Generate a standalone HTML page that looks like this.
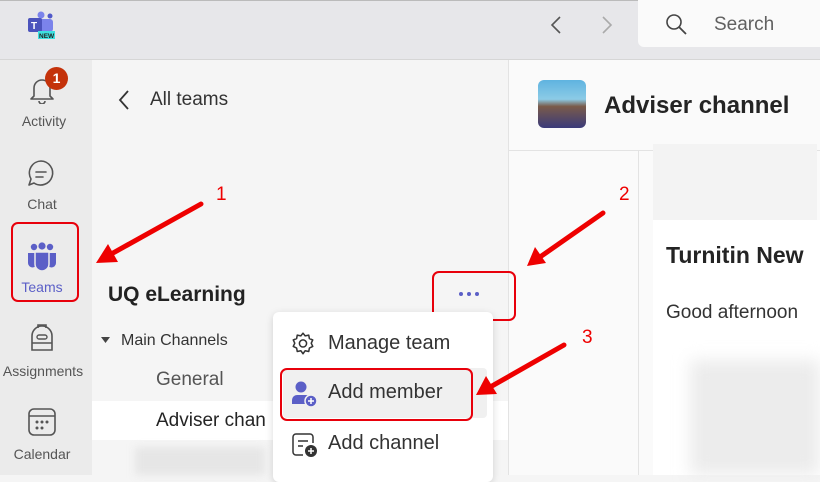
<!DOCTYPE html>
<html><head><style>
*{margin:0;padding:0;box-sizing:border-box}
body{width:820px;height:475px;overflow:hidden;position:relative;font-family:"Liberation Sans","DejaVu Sans",sans-serif;background:#f5f5f5;color:#242424}
.a{position:absolute}
.top{left:0;top:0;width:820px;height:60px;background:#e7e7ea;border-bottom:1px solid #d6d6d6;border-top:1px solid #bbb}
.rail{left:0;top:60px;width:92px;height:415px;background:#ebebeb}
.lp{left:92px;top:60px;width:416px;height:415px;background:#f5f5f5}
.rp{left:508px;top:60px;width:312px;height:415px;background:#fafafa;border-left:1px solid #e3e3e3}
.lbl{width:92px;text-align:center;font-size:14px;color:#555}
.red{border:2.5px solid #e8000b;border-radius:7px}
.num{color:#e00;font-size:19px}
</style></head><body>
<div class="a top"></div>
<div class="a rail"></div>
<div class="a lp"></div>
<div class="a rp"></div>
<!-- teams logo -->
<svg class="a" style="left:26px;top:10px" width="32" height="30" viewBox="0 0 32 30">
<circle cx="15" cy="5" r="3.5" fill="#7b83eb"/><circle cx="24" cy="6" r="2.5" fill="#5059c9"/>
<rect x="13" y="9" width="14" height="13" rx="3" fill="#7b83eb"/>
<rect x="2" y="8" width="14" height="14" rx="2" fill="#4b53bc"/>
<text x="5" y="19" font-size="10" fill="#fff" font-family="Liberation Sans" font-weight="bold">T</text>
<rect x="12" y="21" width="17" height="8" fill="#3ee0e0"/>
<text x="13" y="28" font-size="6.5" fill="#222" font-family="Liberation Sans" font-weight="bold">NEW</text>
</svg>
<svg class="a" style="left:549px;top:15px" width="14" height="20"><path d="M11 2 L3 10 L11 18" fill="none" stroke="#555" stroke-width="1.6"/></svg>
<svg class="a" style="left:600px;top:15px" width="14" height="20"><path d="M3 2 L11 10 L3 18" fill="none" stroke="#aaa" stroke-width="1.6"/></svg>
<div class="a" style="left:638px;top:0;width:182px;height:47px;background:#fafafa;border-radius:0 0 0 6px"></div>
<svg class="a" style="left:665px;top:13px" width="24" height="24"><circle cx="9" cy="9" r="7" fill="none" stroke="#444" stroke-width="1.6"/><path d="M14 14 L21 21" stroke="#444" stroke-width="1.8"/></svg>
<div class="a" style="left:714px;top:14px;font-size:19px;color:#616161">Search</div>

<!-- activity -->
<svg class="a" style="left:27px;top:74px" width="30" height="30"><path d="M7 22 V14 A8 8 0 0 1 23 14 V22 L26 25 H4 Z" fill="none" stroke="#555" stroke-width="1.6" stroke-linejoin="round"/><path d="M12 27 A3 3 0 0 0 18 27" fill="none" stroke="#555" stroke-width="1.6"/></svg>
<div class="a" style="left:45px;top:67px;width:23px;height:23px;border-radius:50%;background:#c4320a;color:#fff;font-size:14px;font-weight:bold;text-align:center;line-height:23px">1</div>
<div class="a lbl" style="left:-2px;top:113px">Activity</div>
<svg class="a" style="left:25px;top:158px" width="32" height="32"><path d="M16 3 A12 12 0 1 1 9 25 L4 27 L6 21 A12 12 0 0 1 16 3 Z" fill="none" stroke="#555" stroke-width="1.6" stroke-linejoin="round"/><path d="M11 14 H21 M11 19 H18" stroke="#555" stroke-width="1.6" stroke-linecap="round"/></svg>
<div class="a lbl" style="left:-4px;top:196px">Chat</div>
<svg class="a" style="left:26px;top:241px" width="32" height="30"><circle cx="8" cy="6" r="3.2" fill="#5b5fc7"/><circle cx="16" cy="5" r="3.6" fill="#5b5fc7"/><circle cx="24" cy="6" r="3.2" fill="#5b5fc7"/><path d="M2 12 H11 V22 A4.5 4.5 0 0 1 2 22 Z" fill="#5b5fc7"/><path d="M21 12 H30 V22 A4.5 4.5 0 0 1 21 22 Z" fill="#5b5fc7"/><path d="M9 11 H23 V23 A7 7 0 0 1 9 23 Z" fill="#5b5fc7" stroke="#ebebeb" stroke-width="1.5"/></svg>
<div class="a lbl" style="left:-4px;top:279px;color:#5b5fc7">Teams</div>
<div class="a red" style="left:11px;top:222px;width:68px;height:80px"></div>
<svg class="a" style="left:27px;top:322px" width="30" height="32"><path d="M5 14 A10 10 0 0 1 25 14 V28 H5 Z" fill="none" stroke="#555" stroke-width="1.6"/><path d="M11 6 V3 H19 V6" fill="none" stroke="#555" stroke-width="1.6"/><rect x="10" y="13" width="10" height="4" rx="2" fill="none" stroke="#555" stroke-width="1.4"/><path d="M5 21 H25" stroke="#555" stroke-width="1.4"/></svg>
<div class="a lbl" style="left:-3px;top:363px">Assignments</div>
<svg class="a" style="left:27px;top:407px" width="30" height="30"><rect x="2" y="2" width="26" height="26" rx="5" fill="none" stroke="#555" stroke-width="1.6"/><path d="M2 9 H28" stroke="#555" stroke-width="1.6"/><g fill="#555"><circle cx="10" cy="15" r="1.5"/><circle cx="15" cy="15" r="1.5"/><circle cx="20" cy="15" r="1.5"/><circle cx="10" cy="21" r="1.5"/><circle cx="15" cy="21" r="1.5"/></g></svg>
<div class="a lbl" style="left:-4px;top:446px">Calendar</div>

<svg class="a" style="left:117px;top:89px" width="14" height="22"><path d="M11 2 L3 11 L11 20" fill="none" stroke="#333" stroke-width="1.8"/></svg>
<div class="a" style="left:150px;top:89px;font-size:19px;color:#333">All teams</div>
<div class="a" style="left:108px;top:283px;font-size:21px;font-weight:bold;color:#222">UQ eLearning</div>
<svg class="a" style="left:458px;top:291px" width="24" height="6"><g fill="#5b5fc7"><circle cx="3" cy="3" r="2"/><circle cx="11" cy="3" r="2"/><circle cx="19" cy="3" r="2"/></g></svg>
<div class="a red" style="left:432px;top:271px;width:84px;height:50px"></div>
<svg class="a" style="left:101px;top:337px" width="10" height="8"><path d="M0 0 H9 L4.5 6 Z" fill="#444"/></svg>
<div class="a" style="left:121px;top:332px;font-size:16px;color:#333">Main Channels</div>
<div class="a" style="left:156px;top:369px;font-size:19px;color:#555">General</div>
<div class="a" style="left:92px;top:401px;width:416px;height:39px;background:#fff"></div>
<div class="a" style="left:156px;top:410px;font-size:19px;color:#242424">Adviser chan</div>
<div class="a" style="left:135px;top:447px;width:130px;height:28px;background:#e6e6e6;filter:blur(4px)"></div>

<div class="a" style="left:538px;top:80px;width:48px;height:48px;border-radius:6px;background:linear-gradient(#5fb3e0,#8ccbe6 40%,#7a5b4a 55%,#3a3a7a)"></div>
<div class="a" style="left:604px;top:92px;font-size:24px;font-weight:bold;color:#242424">Adviser channel</div>
<div class="a" style="left:508px;top:150px;width:312px;height:1px;background:#e3e3e3"></div>
<div class="a" style="left:638px;top:150px;width:1px;height:325px;background:#e3e3e3"></div>
<div class="a" style="left:653px;top:144px;width:164px;height:76px;background:#f3f3f3"></div>
<div class="a" style="left:653px;top:220px;width:167px;height:255px;background:#fff"></div>
<div class="a" style="left:666px;top:242px;font-size:23px;font-weight:bold;color:#242424;white-space:nowrap">Turnitin New</div>
<div class="a" style="left:666px;top:302px;font-size:19px;color:#333;white-space:nowrap">Good afternoon</div>
<div class="a" style="left:690px;top:360px;width:130px;height:115px;background:#ececec;filter:blur(8px)"></div>

<!-- menu -->
<div class="a" style="left:273px;top:312px;width:220px;height:170px;background:#fff;border-radius:6px;box-shadow:0 2px 8px rgba(0,0,0,.15)"></div>
<svg class="a" style="left:290px;top:331px" width="26" height="26" viewBox="0 0 24 24"><path d="M12 2 L14 4.5 L17.3 3.8 L17.9 7 L21 8.3 L19.6 11.3 L21 14.3 L17.9 15.7 L17.3 18.9 L14 18.2 L12 21 L10 18.2 L6.7 18.9 L6.1 15.7 L3 14.3 L4.4 11.3 L3 8.3 L6.1 7 L6.7 3.8 L10 4.5 Z" fill="none" stroke="#333" stroke-width="1.4" stroke-linejoin="round"/><circle cx="12" cy="11.5" r="3.3" fill="none" stroke="#333" stroke-width="1.4"/></svg>
<div class="a" style="left:328px;top:332px;font-size:20px;color:#333">Manage team</div>
<div class="a" style="left:283px;top:368px;width:204px;height:50px;background:#f0f0f0;border-radius:4px"></div>
<svg class="a" style="left:290px;top:380px" width="28" height="28"><circle cx="11" cy="7" r="5.5" fill="#5b5fc7"/><path d="M2 24 V20 A5 5 0 0 1 7 15 H16 A5 5 0 0 1 21 20 V24 Z" fill="#5b5fc7"/><circle cx="21" cy="21" r="6" fill="#5b5fc7" stroke="#f0f0f0" stroke-width="1.5"/><path d="M21 18 V24 M18 21 H24" stroke="#fff" stroke-width="1.5"/></svg>
<div class="a" style="left:328px;top:381px;font-size:20px;color:#333">Add member</div>
<div class="a red" style="left:280px;top:368px;width:193px;height:53px"></div>
<svg class="a" style="left:291px;top:431px" width="28" height="28"><path d="M5 3 H19 A3 3 0 0 1 22 6 V12 M12 24 H5 A3 3 0 0 1 2 21 V6 A3 3 0 0 1 5 3" fill="none" stroke="#333" stroke-width="1.5"/><path d="M7 10 H17 M7 15 H12" stroke="#333" stroke-width="1.5"/><circle cx="20" cy="20" r="6" fill="#333"/><path d="M20 17 V23 M17 20 H23" stroke="#fff" stroke-width="1.5"/></svg>
<div class="a" style="left:328px;top:432px;font-size:20px;color:#333">Add channel</div>

<!-- arrows -->
<svg class="a" style="left:0;top:0" width="820" height="475">
<g stroke="#e00" stroke-width="5" stroke-linecap="round"><path d="M201 204 L113 253"/><path d="M603 213 L540 257"/><path d="M564 345 L492 386"/></g>
<g fill="#e00"><path d="M96 263 L108 244 L118 262 Z"/><path d="M527 266 L535 247 L546 263 Z"/><path d="M476 395 L486 376 L497 394 Z"/></g>
</svg>
<div class="a num" style="left:216px;top:184px">1</div>
<div class="a num" style="left:619px;top:184px">2</div>
<div class="a num" style="left:582px;top:327px">3</div>
</body></html>
